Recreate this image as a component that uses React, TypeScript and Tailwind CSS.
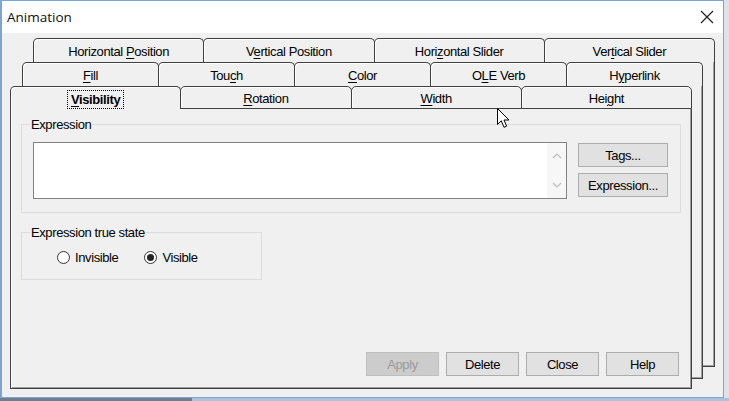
import React from 'react';

type TabDef = { label: React.ReactNode; key: string };

// label with a mnemonic letter underlined
const m = (before: string, letter: string, after: string) => (
    <span className="whitespace-pre">
        {before}
        <u className="underline-offset-2">{letter}</u>
        {after}
    </span>
);

const rowBack: TabDef[] = [
    { key: 'hp', label: m('Horizontal ', 'P', 'osition') },
    { key: 'vp', label: m('V', 'e', 'rtical Position') },
    { key: 'hs', label: m('Hori', 'z', 'ontal Slider') },
    { key: 'vs', label: m('Ver', 't', 'ical Slider') },
];

const rowMid: TabDef[] = [
    { key: 'fill', label: m('', 'F', 'ill') },
    { key: 'touch', label: m('Tou', 'c', 'h') },
    { key: 'color', label: m('', 'C', 'olor') },
    { key: 'ole', label: m('O', 'L', 'E Verb') },
    { key: 'link', label: m('H', 'y', 'perlink') },
];

const Tab: React.FC<{ first?: boolean; bottomLine?: boolean; children: React.ReactNode }> = ({
    first,
    bottomLine,
    children,
}) => (
    <div
        className={
            'flex-1 h-full flex items-center justify-center pt-[2px] bg-[#f0f0f0] border-t border-l border-r border-[#404040] rounded-t-[5px] shadow-[inset_1px_1px_0_#ffffff] ' +
            (first ? '' : '-ml-px ') +
            (bottomLine ? 'border-b' : '')
        }
    >
        {children}
    </div>
);

const Button: React.FC<{ className?: string; disabled?: boolean; children: React.ReactNode }> = ({
    className = '',
    disabled,
    children,
}) => (
    <div
        className={
            'h-[24px] flex items-center justify-center border ' +
            (disabled
                ? 'bg-[#cccccc] border-[#bfbfbf] text-[#9a9a9a] '
                : 'bg-[#e1e1e1] border-[#adadad] text-black ') +
            className
        }
    >
        {children}
    </div>
);

const Radio: React.FC<{ checked?: boolean; label: string }> = ({ checked, label }) => (
    <div className="flex items-center gap-[5px]">
        <div className="w-[13px] h-[13px] rounded-full border border-[#333333] bg-white flex items-center justify-center">
            {checked && <div className="w-[7px] h-[7px] rounded-full bg-[#222222]" />}
        </div>
        <span>{label}</span>
    </div>
);

export default function App() {
    return (
        <div className="w-[729px] h-[401px] overflow-hidden flex flex-col bg-[#dde3ea] font-['Liberation_Sans',Arial,sans-serif] text-[13px] leading-[15px] tracking-[-0.4px] text-black relative">
            <div className="flex">
                {/* window */}
                <div className="w-[724px] h-[398px] flex flex-col border border-l-2 border-[#7aa5d6] bg-[#f0f0f0]">
                    {/* title bar */}
                    <div className="h-[32px] bg-white flex items-center justify-between pl-[5px] pr-[9px]">
                        <span className="font-['Open_Sans',sans-serif] text-[13.5px] tracking-normal text-[#111111]">
                            Animation
                        </span>
                        <svg width="14" height="14" viewBox="0 0 14 14">
                            <path d="M1 1 L13 13 M13 1 L1 13" stroke="#222" strokeWidth="1.2" />
                        </svg>
                    </div>

                    {/* body: stacked tab control */}
                    <div className="flex-1 pl-[8px] pt-[5px]">
                        <div className="grid">
                            {/* back page (row 1 tabs) */}
                            <div className="col-start-1 row-start-1 ml-[23px] w-[682px] flex flex-col">
                                <div className="h-[24px] flex">
                                    {rowBack.map((t, i) => (
                                        <Tab key={t.key} first={i === 0}>
                                            {t.label}
                                        </Tab>
                                    ))}
                                </div>
                                <div className="h-[305px] bg-[#f0f0f0] border-l border-r border-b border-[#404040] shadow-[inset_1px_0_0_#ffffff,inset_-1px_-1px_0_#a0a0a0]" />
                            </div>

                            {/* middle page (row 2 tabs) */}
                            <div className="col-start-1 row-start-1 ml-[12px] mt-[24px] w-[681px] flex flex-col">
                                <div className="h-[24px] flex">
                                    {rowMid.map((t, i) => (
                                        <Tab key={t.key} first={i === 0}>
                                            {t.label}
                                        </Tab>
                                    ))}
                                </div>
                                <div className="h-[293px] bg-[#f0f0f0] border-l border-r border-b border-[#404040] shadow-[inset_1px_0_0_#ffffff,inset_-1px_-1px_0_#a0a0a0]" />
                            </div>

                            {/* front page (row 3 tabs, Visibility selected) */}
                            <div className="col-start-1 row-start-1 mt-[48px] w-[682px] flex flex-col">
                                <div className="h-[23px] flex">
                                    <Tab first>
                                        <span className="font-bold border border-dotted border-black px-[3px] py-[1px]">
                                            <u className="underline-offset-2">V</u>isibility
                                        </span>
                                    </Tab>
                                    <Tab bottomLine>{m('', 'R', 'otation')}</Tab>
                                    <Tab bottomLine>{m('', 'W', 'idth')}</Tab>
                                    <Tab bottomLine>{m('Hei', 'g', 'ht')}</Tab>
                                </div>
                                <div className="h-[280px] flex flex-col bg-[#f0f0f0] border-l border-r border-b border-[#404040] shadow-[inset_1px_0_0_#ffffff,inset_-1px_-1px_0_#a0a0a0] pl-[10px] pr-[12px] pb-[12px]">
                                    {/* Expression group */}
                                    <fieldset className="mt-[8px] w-[660px] h-[96px] border border-[#dcdcdc] pl-[11px]">
                                        <legend className="ml-[-3px] px-[1px] leading-[15px]">Expression</legend>
                                        <div className="flex mt-[10px]">
                                            <div className="w-[534px] h-[57px] bg-white border border-[#828282] flex justify-end">
                                                <div className="w-[19px] h-full bg-[#f7f7f7] flex flex-col items-center justify-between py-[10px]">
                                                    <svg width="10" height="6" viewBox="0 0 10 6">
                                                        <polyline points="1,5 5,1 9,5" fill="none" stroke="#bcbcbc" strokeWidth="1.2" />
                                                    </svg>
                                                    <svg width="10" height="6" viewBox="0 0 10 6">
                                                        <polyline points="1,1 5,5 9,1" fill="none" stroke="#bcbcbc" strokeWidth="1.2" />
                                                    </svg>
                                                </div>
                                            </div>
                                            <div className="ml-[11px] mt-px flex flex-col gap-[6px]">
                                                <Button className="w-[90px]">Tags...</Button>
                                                <Button className="w-[90px]">Expression...</Button>
                                            </div>
                                        </div>
                                    </fieldset>

                                    {/* Expression true state group */}
                                    <fieldset className="mt-[12px] w-[241px] h-[55px] border border-[#dcdcdc] pl-[35px]">
                                        <legend className="ml-[-27px] px-[1px] leading-[15px]">Expression true state</legend>
                                        <div className="mt-[10px] h-[15px] flex items-center gap-[26px]">
                                            <Radio label="Invisible" />
                                            <Radio checked label="Visible" />
                                        </div>
                                    </fieldset>

                                    {/* dialog buttons */}
                                    <div className="mt-auto flex justify-end gap-[7px]">
                                        <Button disabled className="w-[73px]">Apply</Button>
                                        <Button className="w-[73px]">Delete</Button>
                                        <Button className="w-[73px]">Close</Button>
                                        <Button className="w-[73px]">Help</Button>
                                    </div>
                                </div>
                            </div>
                        </div>
                    </div>
                </div>
                <div className="flex-1 bg-[#dde3ea]" />
            </div>
            <div className="flex-1 flex">
                <div className="w-[192px] bg-[#6f7f92]" />
                <div className="flex-1 bg-[#aac2dc]" />
            </div>

            {/* mouse pointer */}
            <svg className="absolute left-[497px] top-[108px]" width="13" height="21" viewBox="0 0 13 21">
                <path
                    d="M0.5 0.5 L0.5 16.5 L4.3 12.8 L7 19.3 L9.6 18.2 L7 12 L12 12 Z"
                    fill="#ffffff"
                    stroke="#000000"
                    strokeWidth="1"
                    strokeLinejoin="round"
                />
            </svg>
        </div>
    );
}
